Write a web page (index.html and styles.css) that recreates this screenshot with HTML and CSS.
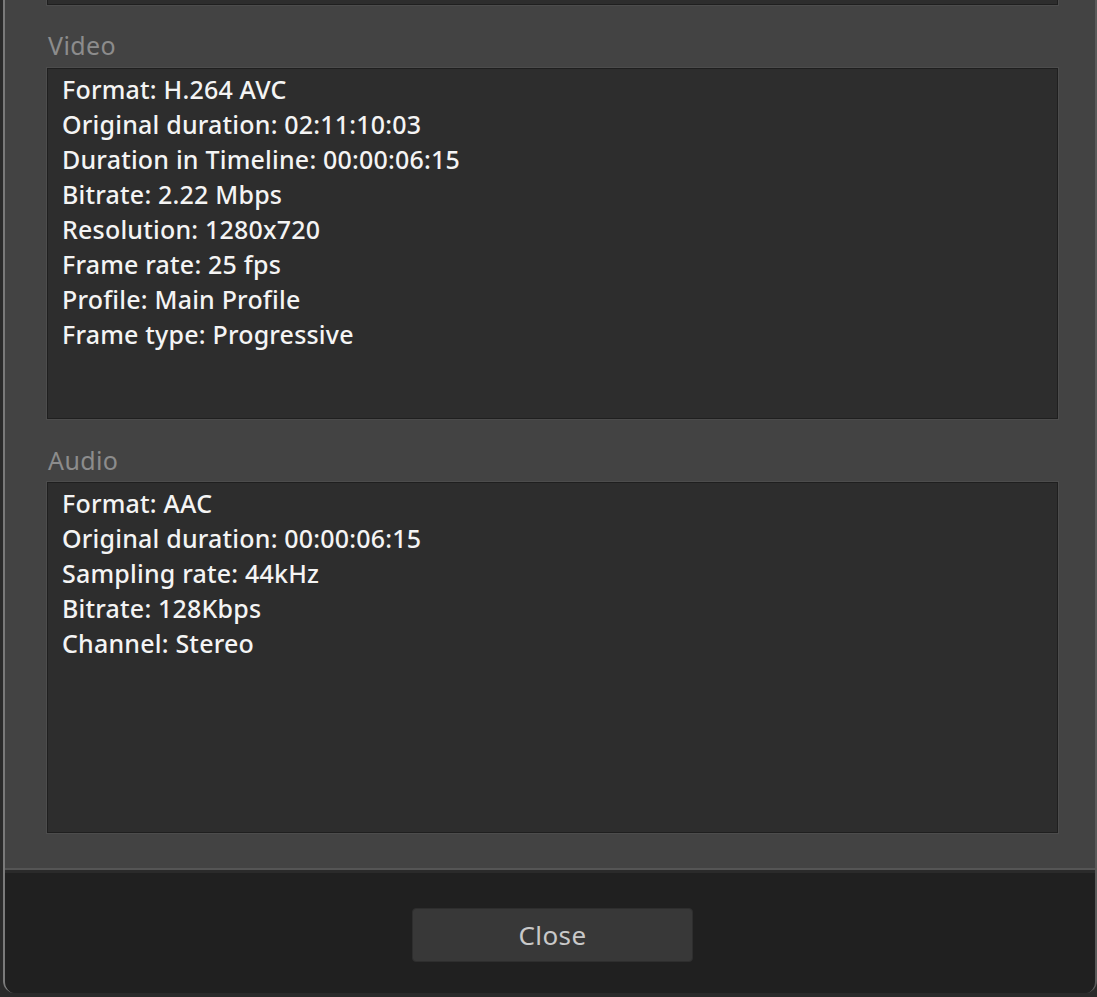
FILE: index.html
```html
<!DOCTYPE html>
<html>
<head>
<meta charset="utf-8">
<link rel="stylesheet" href="styles.css">
</head>
<body>
<div class="window">
  <div class="panel">
    <div class="box box-top"></div>
    <div class="label label-video">Video</div>
    <div class="box box-info">
      <div class="line">Format: H.264 AVC</div>
      <div class="line">Original duration: 02:11:10:03</div>
      <div class="line">Duration in Timeline: 00:00:06:15</div>
      <div class="line">Bitrate: 2.22 Mbps</div>
      <div class="line">Resolution: 1280x720</div>
      <div class="line">Frame rate: 25 fps</div>
      <div class="line">Profile: Main Profile</div>
      <div class="line">Frame type: Progressive</div>
    </div>
    <div class="label label-audio">Audio</div>
    <div class="box box-info">
      <div class="line">Format: AAC</div>
      <div class="line">Original duration: 00:00:06:15</div>
      <div class="line">Sampling rate: 44kHz</div>
      <div class="line">Bitrate: 128Kbps</div>
      <div class="line">Channel: Stereo</div>
    </div>
  </div>
  <div class="footer">
    <button class="btn">Close</button>
  </div>
</div>
</body>
</html>
```
FILE: styles.css
```css
html, body {
  margin: 0;
  padding: 0;
}
body {
  background: #2a2a2a;
  width: 1097px;
  height: 997px;
  overflow: hidden;
  font-family: "Noto Sans", "Open Sans", sans-serif;
}
.window {
  margin-left: 3px;
  width: 1090px;
  height: 993px;
  border-left: 2px solid #7a7a7a;
  border-right: 2px solid #5a5a5a;
  border-bottom-left-radius: 12px;
  border-bottom-right-radius: 12px;
  overflow: hidden;
  display: flex;
  flex-direction: column;
  background: #202020;
}
.panel {
  background: #434343;
  padding: 0 37px 0 42px;
  height: 870px;
  box-sizing: border-box;
  border-bottom: 2px solid #555555;
  display: flex;
  flex-direction: column;
}
.box {
  background: #2d2d2d;
  border: 1px solid #1f1f1f;
  box-shadow: 0 0 0 1px #4c4c4c;
  box-sizing: border-box;
}
.box-top {
  height: 6px;
  border-top: none;
  margin-top: -1px;
}
.label {
  color: #8c8c8c;
  font-size: 25px;
  line-height: 30px;
  padding-left: 1px;
  letter-spacing: 0.4px;
}
.label-video {
  margin-top: 25px;
  margin-bottom: 8px;
}
.label-audio {
  margin-top: 26px;
  margin-bottom: 7px;
}
.box-info {
  height: 351px;
  padding: 3px 0 0 14px;
}
.line {
  color: #f4f4f4;
  font-size: 25px;
  font-weight: 500;
  line-height: 35px;
  letter-spacing: 0.2px;
}
.footer {
  flex: 1;
  border-top: 3px solid #2a2a2a;
  background: #202020;
  display: flex;
  justify-content: center;
  align-items: flex-start;
  padding-top: 35px;
  padding-left: 5px;
}
.btn {
  width: 281px;
  height: 54px;
  background: #383838;
  border: 1px solid #2e2e2e;
  border-radius: 4px;
  color: #c9c9c9;
  font-family: "Noto Sans", "Open Sans", sans-serif;
  font-size: 26px;
  letter-spacing: 0.4px;
  padding: 0;
}
```
